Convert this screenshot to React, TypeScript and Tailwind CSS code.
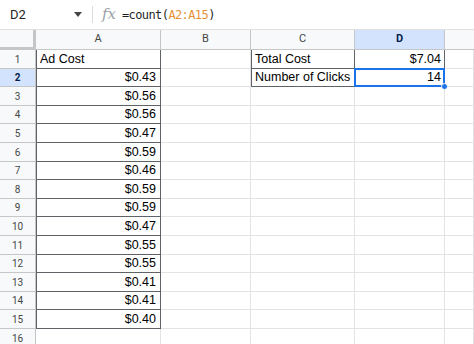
import React from 'react';

const costs = ['$0.43', '$0.56', '$0.56', '$0.47', '$0.59', '$0.46', '$0.59', '$0.59', '$0.47', '$0.55', '$0.55', '$0.41', '$0.41', '$0.40'];

// row heights (px) so 15 rows land on the screenshot gridlines
const tall = [true, false, true, false, true, true, false, true, false, true, true, false, true, false, true];

const gridLine = 'border-r border-b border-[#e2e3e3]';
const dark = 'border-[#5f6368]';

function RowHead({ n, active }: { n: number; active?: boolean }) {
  return (
    <div
      className={`w-[36px] shrink-0 flex items-center justify-center border-r border-b border-[#c4c7c5] text-[10px] font-['Roboto',sans-serif] ${
        active ? 'bg-[#d3e3fd] text-[#041e49] font-bold' : 'bg-[#f8f9fa] text-[#444746]'
      }`}
    >
      {n}
    </div>
  );
}

export default function App() {
  const rows = [];
  for (let i = 0; i < 16; i++) {
    const n = i + 1;
    const h = i === 15 ? 'h-[19px]' : tall[i] ? 'h-[19px]' : 'h-[18px]';
    const inA = n <= 15;
    let aText: string | null = null;
    if (n === 1) aText = 'Ad Cost';
    else if (n <= 15) aText = costs[n - 2];

    rows.push(
      <div key={n} className={`flex ${h}`}>
        <RowHead n={n} active={n === 2} />
        {/* column A */}
        <div
          className={`w-[125px] shrink-0 flex items-center px-[4px] text-[12.5px] text-black whitespace-nowrap ${
            inA
              ? `border-r border-b ${dark} shadow-[inset_1px_0_0_#5f6368] ${n === 1 ? 'justify-start' : 'justify-end'}`
              : gridLine
          }`}
        >
          {aText}
        </div>
        {/* column B */}
        <div className={`w-[90px] shrink-0 ${gridLine}`} />
        {/* column C */}
        {n <= 2 ? (
          <div
            className={`w-[104px] shrink-0 flex items-center px-[4px] text-[12.5px] text-black whitespace-nowrap border-b ${dark} shadow-[inset_1px_0_0_#5f6368] ${
              n === 1 ? `border-r ${dark}` : 'border-r border-r-transparent'
            }`}
          >
            {n === 1 ? 'Total Cost' : 'Number of Clicks'}
          </div>
        ) : (
          <div className={`w-[104px] shrink-0 ${gridLine}`} />
        )}
        {/* column D */}
        {n === 1 && (
          <div className={`w-[90px] shrink-0 flex items-center justify-end px-[3px] text-[12.5px] text-black border-r border-b ${dark}`}>
            $7.04
          </div>
        )}
        {n === 2 && (
          <div className={`relative w-[90px] shrink-0 flex items-center justify-end px-[3px] text-[12.5px] text-black border-r border-b ${dark}`}>
            14
            <div className="absolute -left-[1px] -top-[1px] -right-[1px] -bottom-[1px] border-2 border-[#1a73e8]" />
            <div className="absolute -right-[4px] -bottom-[4px] w-[7px] h-[7px] rounded-full bg-[#1a73e8] border border-white" />
          </div>
        )}
        {n > 2 && <div className={`w-[90px] shrink-0 ${gridLine}`} />}
        {/* column E */}
        <div className={`flex-1 ${gridLine}`} />
      </div>
    );
  }

  return (
    <div className="w-[474px] h-[344px] overflow-hidden bg-white font-['Liberation_Sans',Arial,sans-serif]">
      {/* name box + formula bar */}
      <div className="h-[30px] flex items-center border-b border-[#e1e1e1] bg-white">
        <div className="w-[72px] pl-[10px] text-[13px] text-[#1f1f1f] font-['Roboto',sans-serif]">D2</div>
        <svg width="8" height="5" viewBox="0 0 8 5" className="ml-[2px]">
          <path d="M0 0h8L4 5z" fill="#444746" />
        </svg>
        <div className="ml-[10px] w-px h-[17px] bg-[#dadce0]" />
        <div className="ml-[9px] w-[16px] text-[15px] italic text-[#9aa0a6] font-['DejaVu_Serif',serif] leading-none">fx</div>
        <div className="ml-[4px] text-[12px] font-['DejaVu_Sans_Mono',monospace] text-[#1f1f1f] tracking-[-0.6px]">
          =count(<span className="text-[#e69138]">A2:A15</span>)
        </div>
      </div>
      {/* column headers */}
      <div className="flex h-[20px] bg-[#f8f9fa] text-[11px] text-[#444746] font-['Roboto',sans-serif]">
        <div className="w-[36px] shrink-0 border-r-[3px] border-b-[3px] border-[#c4c7c5] bg-[#f8f9fa]" />
        <div className="w-[125px] shrink-0 flex items-center justify-center border-r border-b border-[#c4c7c5]">A</div>
        <div className="w-[90px] shrink-0 flex items-center justify-center border-r border-b border-[#c4c7c5]">B</div>
        <div className="w-[104px] shrink-0 flex items-center justify-center border-r border-b border-[#c4c7c5]">C</div>
        <div className="w-[90px] shrink-0 flex items-center justify-center border-r border-b border-[#c4c7c5] bg-[#d3e3fd] text-[#041e49] font-bold">D</div>
        <div className="flex-1 border-b border-[#c4c7c5]" />
      </div>
      {rows}
    </div>
  );
}
